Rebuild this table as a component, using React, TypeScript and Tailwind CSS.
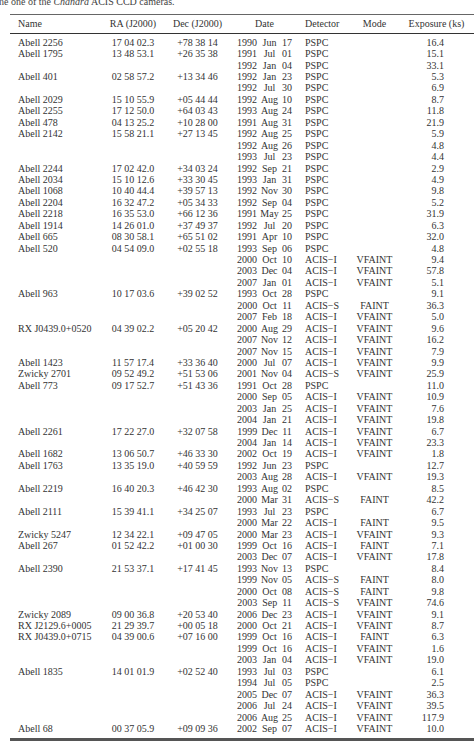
const rows: string[][] = [
    ['Abell 2256', '17 04 02.3', '+78 38 14', '1990 Jun 17', 'PSPC', '', '16.4'],
    ['Abell 1795', '13 48 53.1', '+26 35 38', '1991 Jul 01', 'PSPC', '', '15.1'],
    ['', '', '', '1992 Jan 04', 'PSPC', '', '33.1'],
    ['Abell 401', '02 58 57.2', '+13 34 46', '1992 Jan 23', 'PSPC', '', '5.3'],
    ['', '', '', '1992 Jul 30', 'PSPC', '', '6.9'],
    ['Abell 2029', '15 10 55.9', '+05 44 44', '1992 Aug 10', 'PSPC', '', '8.7'],
    ['Abell 2255', '17 12 50.0', '+64 03 43', '1993 Aug 24', 'PSPC', '', '11.8'],
    ['Abell 478', '04 13 25.2', '+10 28 00', '1991 Aug 31', 'PSPC', '', '21.9'],
    ['Abell 2142', '15 58 21.1', '+27 13 45', '1992 Aug 25', 'PSPC', '', '5.9'],
    ['', '', '', '1992 Aug 26', 'PSPC', '', '4.8'],
    ['', '', '', '1993 Jul 23', 'PSPC', '', '4.4'],
    ['Abell 2244', '17 02 42.0', '+34 03 24', '1992 Sep 21', 'PSPC', '', '2.9'],
    ['Abell 2034', '15 10 12.6', '+33 30 45', '1993 Jan 31', 'PSPC', '', '4.9'],
    ['Abell 1068', '10 40 44.4', '+39 57 13', '1992 Nov 30', 'PSPC', '', '9.8'],
    ['Abell 2204', '16 32 47.2', '+05 34 33', '1992 Sep 04', 'PSPC', '', '5.2'],
    ['Abell 2218', '16 35 53.0', '+66 12 36', '1991 May 25', 'PSPC', '', '31.9'],
    ['Abell 1914', '14 26 01.0', '+37 49 37', '1992 Jul 20', 'PSPC', '', '6.3'],
    ['Abell 665', '08 30 58.1', '+65 51 02', '1991 Apr 10', 'PSPC', '', '32.0'],
    ['Abell 520', '04 54 09.0', '+02 55 18', '1993 Sep 06', 'PSPC', '', '4.8'],
    ['', '', '', '2000 Oct 10', 'ACIS−I', 'VFAINT', '9.4'],
    ['', '', '', '2003 Dec 04', 'ACIS−I', 'VFAINT', '57.8'],
    ['', '', '', '2007 Jan 01', 'ACIS−I', 'VFAINT', '5.1'],
    ['Abell 963', '10 17 03.6', '+39 02 52', '1993 Oct 28', 'PSPC', '', '9.1'],
    ['', '', '', '2000 Oct 11', 'ACIS−S', 'FAINT', '36.3'],
    ['', '', '', '2007 Feb 18', 'ACIS−I', 'VFAINT', '5.0'],
    ['RX J0439.0+0520', '04 39 02.2', '+05 20 42', '2000 Aug 29', 'ACIS−I', 'VFAINT', '9.6'],
    ['', '', '', '2007 Nov 12', 'ACIS−I', 'VFAINT', '16.2'],
    ['', '', '', '2007 Nov 15', 'ACIS−I', 'VFAINT', '7.9'],
    ['Abell 1423', '11 57 17.4', '+33 36 40', '2000 Jul 07', 'ACIS−I', 'VFAINT', '9.9'],
    ['Zwicky 2701', '09 52 49.2', '+51 53 06', '2001 Nov 04', 'ACIS−S', 'VFAINT', '25.9'],
    ['Abell 773', '09 17 52.7', '+51 43 36', '1991 Oct 28', 'PSPC', '', '11.0'],
    ['', '', '', '2000 Sep 05', 'ACIS−I', 'VFAINT', '10.9'],
    ['', '', '', '2003 Jan 25', 'ACIS−I', 'VFAINT', '7.6'],
    ['', '', '', '2004 Jan 21', 'ACIS−I', 'VFAINT', '19.8'],
    ['Abell 2261', '17 22 27.0', '+32 07 58', '1999 Dec 11', 'ACIS−I', 'VFAINT', '6.7'],
    ['', '', '', '2004 Jan 14', 'ACIS−I', 'VFAINT', '23.3'],
    ['Abell 1682', '13 06 50.7', '+46 33 30', '2002 Oct 19', 'ACIS−I', 'VFAINT', '1.8'],
    ['Abell 1763', '13 35 19.0', '+40 59 59', '1992 Jun 23', 'PSPC', '', '12.7'],
    ['', '', '', '2003 Aug 28', 'ACIS−I', 'VFAINT', '19.3'],
    ['Abell 2219', '16 40 20.3', '+46 42 30', '1993 Aug 02', 'PSPC', '', '8.5'],
    ['', '', '', '2000 Mar 31', 'ACIS−S', 'FAINT', '42.2'],
    ['Abell 2111', '15 39 41.1', '+34 25 07', '1993 Jul 23', 'PSPC', '', '6.7'],
    ['', '', '', '2000 Mar 22', 'ACIS−I', 'FAINT', '9.5'],
    ['Zwicky 5247', '12 34 22.1', '+09 47 05', '2000 Mar 23', 'ACIS−I', 'VFAINT', '9.3'],
    ['Abell 267', '01 52 42.2', '+01 00 30', '1999 Oct 16', 'ACIS−I', 'FAINT', '7.1'],
    ['', '', '', '2003 Dec 07', 'ACIS−I', 'VFAINT', '17.8'],
    ['Abell 2390', '21 53 37.1', '+17 41 45', '1993 Nov 13', 'PSPC', '', '8.4'],
    ['', '', '', '1999 Nov 05', 'ACIS−S', 'FAINT', '8.0'],
    ['', '', '', '2000 Oct 08', 'ACIS−S', 'FAINT', '9.8'],
    ['', '', '', '2003 Sep 11', 'ACIS−S', 'VFAINT', '74.6'],
    ['Zwicky 2089', '09 00 36.8', '+20 53 40', '2006 Dec 23', 'ACIS−I', 'VFAINT', '9.1'],
    ['RX J2129.6+0005', '21 29 39.7', '+00 05 18', '2000 Oct 21', 'ACIS−I', 'VFAINT', '8.7'],
    ['RX J0439.0+0715', '04 39 00.6', '+07 16 00', '1999 Oct 16', 'ACIS−I', 'FAINT', '6.3'],
    ['', '', '', '1999 Oct 16', 'ACIS−I', 'VFAINT', '1.6'],
    ['', '', '', '2003 Jan 04', 'ACIS−I', 'VFAINT', '19.0'],
    ['Abell 1835', '14 01 01.9', '+02 52 40', '1993 Jul 03', 'PSPC', '', '6.1'],
    ['', '', '', '1994 Jul 05', 'PSPC', '', '2.5'],
    ['', '', '', '2005 Dec 07', 'ACIS−I', 'VFAINT', '36.3'],
    ['', '', '', '2006 Jul 24', 'ACIS−I', 'VFAINT', '39.5'],
    ['', '', '', '2006 Aug 25', 'ACIS−I', 'VFAINT', '117.9'],
    ['Abell 68', '00 37 05.9', '+09 09 36', '2002 Sep 07', 'ACIS−I', 'VFAINT', '10.0'],
];

const cols = 'grid grid-cols-[90px_66px_63px_71px_45px_59px_65px] items-center';

function DateCell({ value }: { value: string }) {
    const [year, month, day] = value.split(' ');
    return (
        <div className="flex justify-center">
            <div className="flex gap-[3px]">
                <span>{year}</span>
                <span className="w-[19px] text-center">{month}</span>
                <span>{day}</span>
            </div>
        </div>
    );
}

export default function App() {
    return (
        <div className="w-[474px] h-[741px] overflow-hidden bg-white text-[10px] leading-none text-[#333] font-['Liberation_Serif',serif]">
            {/* caption, cut off at the top */}
            <div className="h-[14px] overflow-hidden">
                <p className="-mt-[3px] text-[10px] leading-[10px] whitespace-nowrap -ml-[1px] text-[#444]">
                    he one of the <i>Chandra</i> ACIS CCD cameras.
                </p>
            </div>

            <div className="ml-[10px] h-px bg-[#666]" />

            {/* header */}
            <div className={`${cols} ml-[10px] h-[18px]`}>
                <div className="pl-[8px]">Name</div>
                <div className="text-center">RA (J2000)</div>
                <div className="text-center">Dec (J2000)</div>
                <div className="text-center">Date</div>
                <div className="pl-[5px]">Detector</div>
                <div className="text-center">Mode</div>
                <div className="text-center">Exposure (ks)</div>
            </div>

            <div className="ml-[10px] h-px bg-[#333]" />

            {/* body */}
            <div className="pt-[3px]">
                {rows.map((r, i) => (
                    <div key={i} className={`${cols} ml-[10px] h-[11.44px]`}>
                        <div className="pl-[8px] whitespace-nowrap">{r[0]}</div>
                        <div className="text-center">{r[1]}</div>
                        <div className="text-center">{r[2]}</div>
                        <DateCell value={r[3]} />
                        <div className="pl-[5px] whitespace-nowrap">{r[4]}</div>
                        <div className="text-center">{r[5]}</div>
                        <div className="text-right pr-[25px]">{r[6]}</div>
                    </div>
                ))}
            </div>

            <div className="mt-[3.2px] ml-[10px] h-[3px] bg-[#555]" />
        </div>
    );
}
